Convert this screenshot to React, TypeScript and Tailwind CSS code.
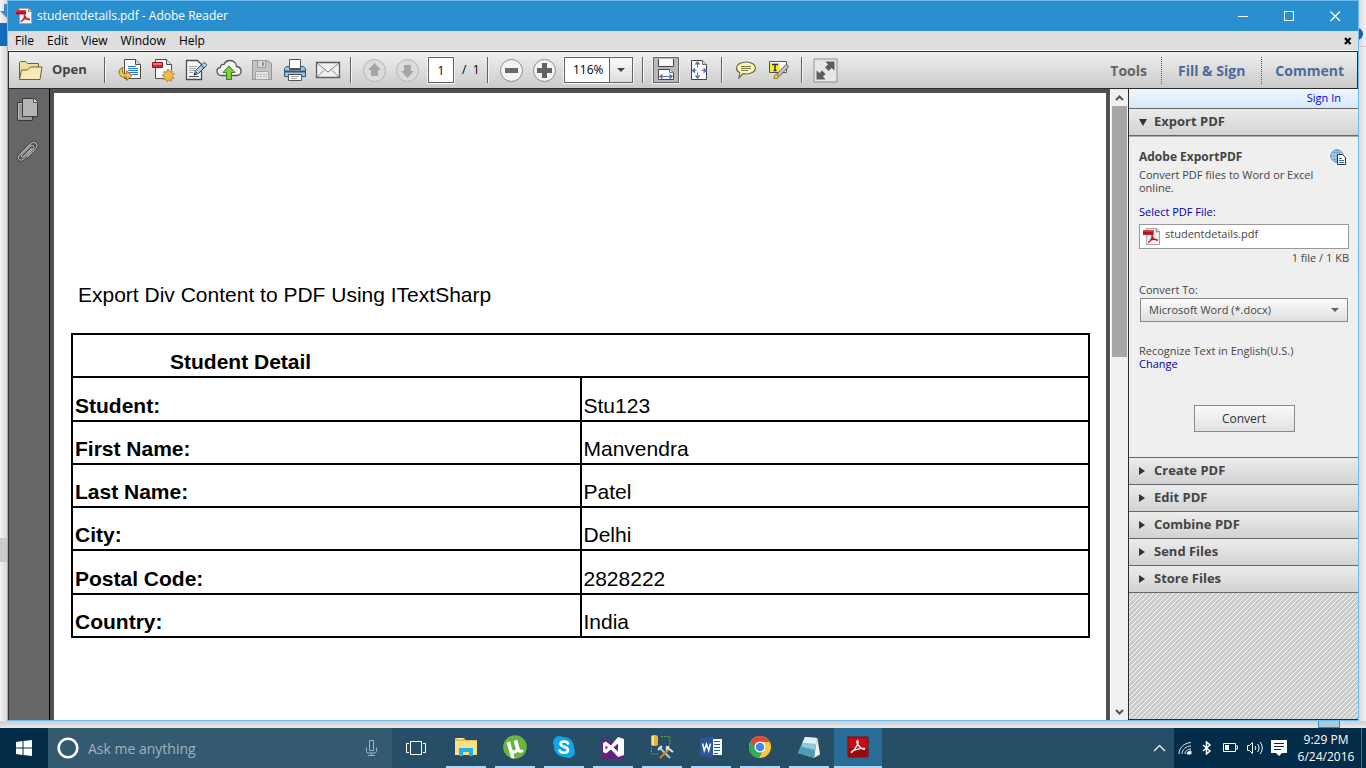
import React from "react";

type IconProps = { className?: string };

const PdfIcon = ({ className }: IconProps) => (
  <svg viewBox="0 0 16 16" className={className} aria-hidden="true">
    <path d="M3.5.5h9l3 3v12h-12z" fill="#f7f3f3" stroke="#a9a2a2" />
    <path d="M12.500.5v3h3" fill="#ddd" stroke="#a08080" />
    <path d="M0 2h10v4.500H0z" fill="#b3131c" />
    <path d="M0 2h10v1.500H0z" fill="#d8444a" />
    <path d="M8.500 6.500c.3 3-1.500 6-3.700 7.200M8.500 7c.5 2.500 2.500 4.500 5.500 4.500M6.500 11.500c2-1 4.500-1.200 7-.5" fill="none" stroke="#c01822" strokeWidth="1.300" />
  </svg>
);

const FolderIcon = () => (
  <svg width="25" height="21" viewBox="0 0 25 21" aria-hidden="true">
    <path d="M1.500 18.500v-16l1-1h5l2 2h11v15z" fill="#f0dda0" stroke="#6d6242" strokeLinejoin="round" />
    <path d="M1.500 19.500l2-9.500h6l3-3h11.500l-2 12.500z" fill="#f7e9b8" stroke="#6d6242" strokeLinejoin="round" />
  </svg>
);

const SheetBase = ({ x = 5 }: { x?: number }) => (
  <g transform={`translate(${x} 0)`}>
    <path d="M.5 1.500h11l5 5v14H.5z" fill="#fafafa" stroke="#4b4b4b" strokeLinejoin="round" />
    <path d="M11.500 1.500v5h5" fill="#ddd" stroke="#4b4b4b" strokeLinejoin="round" />
  </g>
);

const ConvertIcon = () => (
  <svg width="24" height="24" viewBox="0 0 24 24" aria-hidden="true">
    <SheetBase x={6} />
    <path d="M10 8.500h8M10 10.500h10M10 12.500h10M11 14.500h9M14 16.500h6" stroke="#2f73c4" />
    <path d="M5 9.500C2 10.500 0 13 1.500 16.500c1.500 2.500 4 3 7 2.500v3.500l5.500-5-5.500-4.500v2.700c-2 .5-3.500 0-4-1.800-.3-1.500 0-3 .5-4.400z" fill="#f3c24f" stroke="#9c6d13" strokeLinejoin="round" />
  </svg>
);

const CreateIcon = () => (
  <svg width="24" height="24" viewBox="0 0 24 24" aria-hidden="true">
    <SheetBase x={4} />
    <path d="M1.500 4.500h10v5h-10z" fill="#d9252b" stroke="#9a1419" />
    <path d="M2 6h9" stroke="#f08a8c" strokeWidth="1.500" />
    <path d="M17 11l1.400 2.300 2.600-.9-.3 2.700 2.700.9-2 1.900 1.600 2.300-2.700.4.100 2.700-2.400-1.400-2.100 1.800-1-2.600-2.700.3 1.100-2.500-2.300-1.500 2.500-1.200-.7-2.600 2.600.6z" fill="#f0bd45" stroke="#a97c1d" strokeWidth=".8" />
  </svg>
);

const SignIcon = () => (
  <svg width="24" height="24" viewBox="0 0 24 24" aria-hidden="true">
    <path d="M2.500 2.500h11l4 4v15h-15z" fill="#f7f7f7" stroke="#4b4b4b" strokeWidth="1.300" />
    <path d="M5 8.500h8M5 10.500h7M5 12.500h6M5 14.500h4" stroke="#a5a5a5" />
    <path d="M5 18.500h10" stroke="#555" />
    <path d="M10 17l1.500-4.500 8-7.500c1-1 4 1.500 3 2.500l-8 8z" fill="#a9cbe8" stroke="#34465a" strokeLinejoin="round" />
    <path d="M10 17l3-3M17 7l3 3" stroke="#34465a" />
  </svg>
);

const CloudIcon = () => (
  <svg width="26" height="24" viewBox="0 0 26 24" aria-hidden="true">
    <path d="M6 17.500C2.500 17.500 1 15.500 1 13.200 1 11 2.500 9.500 4.500 9.300 4.500 7 6 6 8 6.500 9 4 11 2.500 14 2.500c4 0 6.500 3 6.500 6 2.500.3 4.500 2 4.500 4.500 0 3-2 4.500-4.500 4.500z" fill="#f2f2f2" stroke="#555" strokeWidth="1.300" />
    <path d="M13 8l6 6.500h-3.500v7h-5v-7H7z" fill="#7fd03c" stroke="#3f7d1b" strokeLinejoin="round" />
  </svg>
);

const SaveIcon = () => (
  <svg width="22" height="24" viewBox="0 0 22 24" aria-hidden="true">
    <path d="M1.500 2.500h15l4 3v16h-19z" fill="#c3c3c3" stroke="#929292" />
    <path d="M6.500 2.500h8v7h-8z" fill="#dadada" stroke="#999" />
    <path d="M11 4h2v4h-2z" fill="#999" />
    <path d="M4.500 13.500h13v8h-13z" fill="#e3e3e3" stroke="#a5a5a5" />
    <path d="M6 16.500h10M6 18.500h10" stroke="#b5b5b5" strokeDasharray="2 1" />
  </svg>
);

const PrintIcon = () => (
  <svg width="24" height="24" viewBox="0 0 24 24" aria-hidden="true">
    <path d="M6.500 1.500h11v9h-11z" fill="#fff" stroke="#555" />
    <path d="M3.500 8.500h3v3h11v-3h3l2 2v8h-4v-2h-13v2h-4v-8z" fill="#9cc3dd" stroke="#34566f" strokeLinejoin="round" />
    <path d="M2 13.500h20" stroke="#34566f" strokeWidth="2" />
    <path d="M5.500 16.500h13v6h-13z" fill="#fff" stroke="#555" />
    <path d="M8 18.500h8M8 20.500h6" stroke="#aaa" />
  </svg>
);

const MailIcon = () => (
  <svg width="26" height="18" viewBox="0 0 26 18" aria-hidden="true">
    <path d="M1.500 1.500h23v15h-23z" fill="#efefef" stroke="#5c5c5c" strokeWidth="1.300" />
    <path d="M2 2l11 9L24 2M2 16l8-7.500M24 16l-8-7.500" fill="none" stroke="#8a8a8a" />
  </svg>
);

const RoundIcon = ({ kind }: { kind: "up" | "down" | "minus" | "plus" }) => {
  const faint = kind === "up" || kind === "down";
  return (
    <svg width="25" height="25" viewBox="0 0 25 25" aria-hidden="true">
      <circle cx="12.500" cy="12.500" r="11" fill={faint ? "#dcdcdc" : "#f3f3f3"} stroke={faint ? "#b4b4b4" : "#8c8c8c"} />
      {kind === "up" && <path d="M12.500 5l6.500 7h-3v6H9v-6H6z" fill="#a5a5a5" />}
      {kind === "down" && <path d="M12.500 20L6 13h3V7h7v6h3z" fill="#a5a5a5" />}
      {kind === "minus" && <path d="M6 10h13v5H6z" fill="#686868" />}
      {kind === "plus" && <path d="M10 5h5v5h5v5h-5v5h-5v-5H5v-5h5z" fill="#626262" />}
    </svg>
  );
};

const FitWidthIcon = () => (
  <svg width="18" height="22" viewBox="0 0 18 22" aria-hidden="true">
    <path d="M1.500 0v7.500h15V0" fill="#f7f7f7" stroke="#444" />
    <path d="M1.500 10.500h11l4 3v7h-15z" fill="#fff" stroke="#444" />
    <path d="M12.500 10.500v3h4" fill="#ddd" stroke="#777" />
    <path d="M4 17.500h10" stroke="#5573b4" />
    <path d="M2 17.500l3.500-3v6zM16 17.500l-3.500-3v6z" fill="#5573b4" />
  </svg>
);

const FitPageIcon = () => (
  <svg width="18" height="20" viewBox="0 0 18 20" aria-hidden="true">
    <path d="M1.500.5h11l4 4v15h-15z" fill="#fff" stroke="#444" />
    <path d="M12.500.5v4h4" fill="#ddd" stroke="#666" />
    <path d="M7.500 2.500v5m0 5v5M2.500 10.500h4m5 0h4" stroke="#5573b4" />
    <path d="M7.500 1L4.500 4.500h6zM7.500 19l-3-3.500h6zM1.500 10.500l3.500-3v6zM17 10.500l-3.500-3v6z" fill="#5573b4" />
  </svg>
);

const CommentIcon = () => (
  <svg width="22" height="18" viewBox="0 0 22 18" aria-hidden="true">
    <path d="M11 1c5.500 0 9.500 2.500 9.500 6s-4 6-9.500 6c-1 0-2-.1-3-.3L4 17l.8-5.200C2.500 10.700 1.500 9 1.500 7c0-3.500 4-6 9.500-6z" fill="#fff8a0" stroke="#69655a" strokeWidth="1.200" />
    <path d="M6 5.500h10M6 7.500h10M6 9.500h7" stroke="#77735a" />
  </svg>
);

const HighlightIcon = () => (
  <svg width="22" height="20" viewBox="0 0 22 20" aria-hidden="true">
    <path d="M1.500 1.500h17v11h-17z" fill="#fff" stroke="#555" />
    <path d="M2 3h10v9H2z" fill="#ffee2f" />
    <path d="M4 4.500h6M7 4.500v6M5.500 10.500h3" stroke="#333" strokeWidth="1.500" />
    <path d="M8.500 14.500l9-9.500c1.500-1 3.500 1 2.500 2.500l-9 9z" fill="#c5c5c5" stroke="#555" />
    <path d="M6 18.500c0-2.500 1-4 2.500-4l2.500 2c-.5 1.500-2.500 2.500-5 2z" fill="#e8d52d" stroke="#7d731d" />
  </svg>
);

const FullScreenIcon = () => (
  <svg width="25" height="25" viewBox="0 0 25 25" aria-hidden="true">
    <path d="M1 1h23v23H1z" fill="#e6e6e6" stroke="#8f8f8f" />
    <path d="M21.500 3.500v9l-3-2.500-3 3-3.500-3.500 3-3L12.500 3.500zM3.500 21.500v-9l3 2.500 2.500-2.500 3.500 3.500-2.500 2.500 2.500 3z" fill="#5d5d5d" />
  </svg>
);

const PagesIcon = () => (
  <svg width="23" height="25" viewBox="0 0 23 25" aria-hidden="true">
    <path d="M1.500 5.500h15v18h-15z" fill="#999" stroke="#393939" />
    <path d="M2.500 22V6.500H6" fill="none" stroke="#bbb" />
    <path d="M6.500 1.500h12l3 3v15h-15z" fill="#b5b5b5" stroke="#393939" />
    <path d="M17.500 1.500v4h4" fill="#ddd" stroke="#555" />
  </svg>
);

const clipPath = "M16.500 8.500l-8 8c-1.500 1.500-3-.2-1.700-1.700L15 6.500c2.700-2.500 5.200 0 3 2.500l-9.500 9.800c-3.600 3.400-7-.5-4-3.800L15.500 4c4.300-3.700 8.500.8 5 4.800L12.500 17";

const ClipIcon = () => (
  <svg width="25" height="25" viewBox="0 0 25 25" fill="none" strokeLinecap="round" aria-hidden="true">
    <path d={clipPath} stroke="#3c3c3c" strokeWidth="2.800" />
    <path d={clipPath} stroke="#b0b0b0" strokeWidth="1.200" />
  </svg>
);

const GlobeDocIcon = () => (
  <svg width="17" height="16" viewBox="0 0 17 16" className="mr-[2px]" aria-hidden="true">
    <circle cx="7" cy="7" r="6.200" fill="#b9d7f0" stroke="#4b86bd" />
    <path d="M1 7h12M7 1v12M2.500 3.500h9M2.500 10.500h9M7 1C3 4 3 10 7 13M7 1c4 3 4 9 0 12" fill="none" stroke="#5f97ca" strokeWidth=".8" />
    <path d="M7.500 5.500h5l3 3v7h-8z" fill="#fff" stroke="#333" />
    <path d="M9 9.500h3M9 11.500h5M9 13.500h5" stroke="#2f73c4" />
  </svg>
);

const Separator = () => <span className="mx-[6px] h-[26px] w-[2px] shrink-0 border-r border-[#f4f4f4] bg-[#626262]" />;

const ToolButton = ({ label, children }: { label: string; children: React.ReactNode }) => (
  <button type="button" aria-label={label} className="flex h-[30px] w-[33px] shrink-0 items-center justify-center">
    {children}
  </button>
);

const TitleBar = () => (
  <header className="flex h-[31px] shrink-0 items-center border-t border-[#6abdf2] bg-[#2a8fce] text-white">
    <PdfIcon className="ml-[8px] h-4 w-4" />
    <h1 className="ml-[5px] text-[12px] leading-4">studentdetails.pdf - Adobe Reader</h1>
    <div className="ml-auto flex h-full">
      <button type="button" aria-label="Minimize" className="flex w-[46px] items-center justify-center">
        <svg width="11" height="11"><path d="M0 5.500h10" stroke="#fff" /></svg>
      </button>
      <button type="button" aria-label="Maximize" className="flex w-[46px] items-center justify-center">
        <svg width="11" height="11"><path d="M.5.5h9v9h-9z" fill="none" stroke="#fff" /></svg>
      </button>
      <button type="button" aria-label="Close" className="flex w-[46px] items-center justify-center">
        <svg width="11" height="11"><path d="M.5.5l9.500 9.500M10 .5L.5 10" stroke="#fff" strokeWidth="1.200" /></svg>
      </button>
    </div>
  </header>
);

const MenuBar = () => (
  <nav className="flex h-[20px] shrink-0 items-center border-b border-white bg-[#dedede] text-[12px] leading-4 text-black">
    {["File", "Edit", "View", "Window", "Help"].map((m) => (
      <button key={m} type="button" className="pr-[6px] pl-[7px]">{m}</button>
    ))}
    <button type="button" aria-label="Close document" className="mr-[6px] ml-auto">
      <svg width="8" height="8"><path d="M1 1l5.500 6M6.500 1L1 7" stroke="#000" strokeWidth="2.200" /></svg>
    </button>
  </nav>
);

const Toolbar = () => (
  <div className="flex h-[38px] shrink-0 items-center border border-[#2c2c2c] bg-gradient-to-b from-[#efefef] to-[#cbcbcb] text-[12px] text-black">
    <button type="button" className="flex w-[89px] shrink-0 items-center gap-[9px] pl-[9px] text-[13px] font-bold text-[#444]">
      <FolderIcon />
      Open
    </button>
    <Separator />
    <div className="ml-px flex">
      <ToolButton label="Convert file"><ConvertIcon /></ToolButton>
      <ToolButton label="Create PDF"><CreateIcon /></ToolButton>
      <ToolButton label="Sign"><SignIcon /></ToolButton>
      <ToolButton label="Upload"><CloudIcon /></ToolButton>
      <ToolButton label="Save"><SaveIcon /></ToolButton>
      <ToolButton label="Print"><PrintIcon /></ToolButton>
      <ToolButton label="Email"><MailIcon /></ToolButton>
    </div>
    <Separator />
    <ToolButton label="Previous page"><RoundIcon kind="up" /></ToolButton>
    <ToolButton label="Next page"><RoundIcon kind="down" /></ToolButton>
    <input aria-label="Page number" defaultValue="1" className="ml-[4px] h-[26px] w-[26px] shrink-0 border border-[#636363] bg-white text-center text-[12px] outline outline-[#f4f4f4]" />
    <span className="w-[27px] shrink-0 pl-[8px] whitespace-pre">/  1</span>
    <Separator />
    <ToolButton label="Zoom out"><RoundIcon kind="minus" /></ToolButton>
    <ToolButton label="Zoom in"><RoundIcon kind="plus" /></ToolButton>
    <div className="relative mr-[3px] ml-[3px] h-[26px] w-[69px] shrink-0 border border-[#636363] bg-white outline outline-[#f4f4f4]">
      <select aria-label="Zoom level" className="h-full w-full appearance-none pl-[8px] text-[12px]">
        <option>116%</option>
      </select>
      <span className="pointer-events-none absolute inset-y-0 right-0 flex w-[23px] items-center justify-center border-l border-[#636363] bg-gradient-to-b from-[#fafafa] to-[#dedede]">
        <svg width="8" height="4"><path d="M0 0h8L4 4z" fill="#444" /></svg>
      </span>
    </div>
    <Separator />
    <button type="button" aria-label="Fit width" aria-pressed="true" className="mx-[3px] flex h-[26px] w-[26px] shrink-0 items-center justify-center border border-[#666] bg-[#b9b9b9] outline outline-[#f4f4f4]">
      <FitWidthIcon />
    </button>
    <ToolButton label="Fit page"><FitPageIcon /></ToolButton>
    <Separator />
    <ToolButton label="Comment"><CommentIcon /></ToolButton>
    <ToolButton label="Highlight"><HighlightIcon /></ToolButton>
    <Separator />
    <ToolButton label="Full screen"><FullScreenIcon /></ToolButton>
    <div className="ml-auto flex h-[27px] items-center text-[14px] font-bold text-[#4a6b9c]">
      <button type="button" className="h-full px-[14px] text-[#656565]">Tools</button>
      <button type="button" className="h-full border-l border-dotted border-[#555] px-[16px]">Fill &amp; Sign</button>
      <button type="button" className="h-full border-l border-dotted border-[#555] px-[13px]">Comment</button>
    </div>
  </div>
);

const rows: [string, string][] = [
  ["Student:", "Stu123"],
  ["First Name:", "Manvendra"],
  ["Last Name:", "Patel"],
  ["City:", "Delhi"],
  ["Postal Code:", "2828222"],
  ["Country:", "India"],
];

const DocumentPage = () => (
  <main className="min-w-0 flex-1 bg-[#505050] px-[4px] pt-[4px]">
    <article className="h-full bg-white pt-[188px] pr-[16px] pl-[17px] font-['Liberation_Sans',Arial,sans-serif] text-[21px] leading-7 text-black">
      <p className="pl-[7px]">Export Div Content to PDF Using ITextSharp</p>
      <table className="mt-[24px] h-[305px] w-full table-fixed border-collapse border-2 border-black">
        <tbody>
          <tr>
            <th colSpan={2} className="border-2 border-black p-0 pl-[97px] text-left align-bottom font-bold">Student Detail</th>
          </tr>
          {rows.map(([k, v]) => (
            <tr key={k}>
              <th scope="row" className="border-2 border-black p-0 pl-[2px] text-left align-bottom font-bold">{k}</th>
              <td className="border-2 border-black p-0 pl-[2px] align-bottom">{v}</td>
            </tr>
          ))}
        </tbody>
      </table>
    </article>
  </main>
);

const ScrollBar = () => (
  <div className="flex w-[18px] shrink-0 flex-col items-center border-l border-white bg-[#f0f0f0]">
    <button type="button" aria-label="Scroll up" className="flex h-[17px] w-full items-center justify-center">
      <svg width="9" height="6"><path d="M1 5l3.500-3.500L8 5" fill="none" stroke="#555" strokeWidth="2" /></svg>
    </button>
    <div className="h-[251px] w-[15px] bg-[#a6a6a6]" />
    <button type="button" aria-label="Scroll down" className="mt-auto flex h-[17px] w-full items-center justify-center">
      <svg width="9" height="6"><path d="M1 1l3.500 3.500L8 1" fill="none" stroke="#555" strokeWidth="2" /></svg>
    </button>
  </div>
);

const SidePanel = () => (
  <aside className="flex w-[230px] shrink-0 flex-col border-b border-l border-[#2c2c2c] bg-[#efefef] text-[11px] text-[#444]">
    <div className="flex h-[19px] shrink-0 items-center justify-end bg-gradient-to-b from-[#eef7fe] to-[#d4e9f9] pr-[17px]">
      <a href="#sign-in" className="text-[#0000e0]">Sign In</a>
    </div>
    <button type="button" aria-expanded="true" className="flex h-[28px] shrink-0 items-center border-t border-b border-[#666] bg-gradient-to-b from-[#ececec] to-[#d2d2d2] pl-[10px] text-[13px] font-bold text-[#444]">
      <svg width="8" height="7" className="mr-[7px]"><path d="M0 0h8L4 7z" fill="#333" /></svg>
      Export PDF
    </button>
    <form className="flex shrink-0 flex-col border-t border-[#aaa] pt-[12px] pr-[9px] pb-[25px] pl-[10px]" onSubmit={(e) => e.preventDefault()}>
      <div className="flex justify-between">
        <h2 className="text-[12px] leading-4 font-bold">Adobe ExportPDF</h2>
        <GlobeDocIcon />
      </div>
      <p className="mt-[3px] leading-[13px]">Convert PDF files to Word or Excel<br />online.</p>
      <label htmlFor="pdf-file" className="mt-[11px] leading-[14px] text-[#0000a8]">Select PDF File:</label>
      <div className="mt-[5px] flex h-[25px] items-center border border-[#999] bg-white px-[3px]">
        <PdfIcon className="h-[17px] w-[17px] shrink-0" />
        <input id="pdf-file" readOnly value="studentdetails.pdf" className="mb-[4px] ml-[5px] min-w-0 flex-1 outline-none" />
      </div>
      <p className="mt-[2px] text-right leading-[14px]">1 file / 1 KB</p>
      <label htmlFor="format" className="mt-[18px] leading-[14px]">Convert To:</label>
      <div className="relative mx-px mt-[1px] h-[24px] border border-[#8a8a8a] bg-gradient-to-b from-[#fbfbfb] to-[#dfdfdf]">
        <select id="format" className="h-full w-full appearance-none pl-[8px] text-[11px]">
          <option>Microsoft Word (*.docx)</option>
        </select>
        <svg width="8" height="4" className="pointer-events-none absolute top-[9px] right-[8px]"><path d="M0 0h8L4 4z" fill="#666" /></svg>
      </div>
      <p className="mt-[22px] leading-[13px]">Recognize Text in English(U.S.)</p>
      <a href="#language" className="self-start leading-[13px] text-[#0000a8]">Change</a>
      <button type="submit" className="mt-[35px] h-[27px] w-[101px] self-center border border-[#8a8a8a] bg-gradient-to-b from-[#fafafa] to-[#e0e0e0] text-[12px] text-[#333]">Convert</button>
    </form>
    {["Create PDF", "Edit PDF", "Combine PDF", "Send Files", "Store Files"].map((s) => (
      <button key={s} type="button" aria-expanded="false" className="flex h-[27px] shrink-0 items-center border-t border-[#666] bg-gradient-to-b from-[#ececec] to-[#d2d2d2] pl-[10px] text-[13px] font-bold text-[#444]">
        <svg width="6" height="8" className="mr-[9px]"><path d="M0 0v8l6-4z" fill="#333" /></svg>
        {s}
      </button>
    ))}
    <div className="min-h-0 flex-1 border-t border-[#666]">
      <svg width="100%" height="100%" className="block" aria-hidden="true">
        <defs>
          <pattern id="hatch" width="5" height="5" patternUnits="userSpaceOnUse" shapeRendering="crispEdges">
            <path d="M0 0h5v5H0z" fill="#cbcbcb" />
            <path d="M4 0h1v1H4zM3 1h1v1H3zM2 2h1v1H2zM1 3h1v1H1zM0 4h1v1H0z" fill="#fafafa" />
          </pattern>
        </defs>
        <rect width="100%" height="100%" fill="url(#hatch)" />
      </svg>
    </div>
  </aside>
);

const taskApps: { name: string; icon: React.ReactNode }[] = [
  {
    name: "File Explorer",
    icon: (
      <svg width="24" height="22" viewBox="0 0 24 22">
        <path d="M1 2h9l1.500 2H23v15H1z" fill="#e8c052" />
        <path d="M1 5h22v14H1z" fill="#fbe08c" />
        <path d="M3 2.500h6" stroke="#fff2b8" />
        <path d="M5 20v-8h14v8h-4v-4H9v4z" fill="#1fb3ec" />
      </svg>
    ),
  },
  {
    name: "uTorrent",
    icon: (
      <svg width="24" height="24" viewBox="0 0 24 24">
        <circle cx="12" cy="12" r="11.800" fill="#6db33f" />
        <path d="M3.500 7.500l3.500-1.200 2.200 8c.6 2 4 1.200 3.500-1l-2-7.300 3.500-1.200 2.500 9c.4 1.200 1.500 1.300 3 .6l.8 2.300c-2.300 1.600-4.500 1.500-5.700-.2-1 1.800-2.800 2.300-4.300 2l1 5-3.300-.6z" fill="#fff" />
      </svg>
    ),
  },
  {
    name: "Skype",
    icon: (
      <svg width="24" height="24" viewBox="0 0 24 24">
        <circle cx="12" cy="12" r="10" fill="#10a7e8" />
        <circle cx="7.500" cy="7.500" r="6.500" fill="#10a7e8" />
        <circle cx="16.500" cy="16.500" r="6.500" fill="#10a7e8" />
        <path d="M16 8.500C15 6 8.500 5.500 8.500 9c0 3.500 7.500 2 7.500 6 0 3.500-7 3.500-8.500.5" fill="none" stroke="#fff" strokeWidth="2.600" strokeLinecap="round" />
      </svg>
    ),
  },
  {
    name: "Visual Studio",
    icon: (
      <svg width="24" height="24" viewBox="0 0 24 24">
        <path d="M1 5h6l5 3 5-6 6 2v20H1z" fill="#68217a" />
        <path d="M2 8l3-1.500 5 4L17 2l6 2v16l-6 2-7-7.500-5 4L2 17zm2.500 2.500v4l2.500-2zm12.500-2l-4.500 4L17 16.500z" fill="#fff" fillRule="evenodd" />
      </svg>
    ),
  },
  {
    name: "SQL Server",
    icon: (
      <svg width="26" height="26" viewBox="0 0 26 26">
        <path d="M2 2.500c0-2 7-2 7 0v8c0 2-7 2-7 0z" fill="#e9b332" />
        <path d="M4 2v9" stroke="#fff0a0" strokeWidth="1.500" />
        <path d="M12 2.500h9v8M2.500 13v7H9" fill="none" stroke="#55a845" strokeDasharray="2 1" />
        <path d="M10 13l11 11" stroke="#b7c3cc" strokeWidth="2" />
        <path d="M20 15l-9 9" stroke="#c58b2b" strokeWidth="2" />
        <path d="M17 12.500l7 5.500M20 12l-3 4M9 16l4-4" stroke="#dde5ea" strokeWidth="2" />
      </svg>
    ),
  },
  {
    name: "Word",
    icon: (
      <svg width="24" height="24" viewBox="0 0 24 24">
        <path d="M13 4h10v16H13z" fill="#fff" />
        <path d="M15 6.500h6M15 9.500h6M15 12.500h6M15 15.500h6M15 18.500h4" stroke="#2b579a" />
        <path d="M1 3.500L14 1v22L1 20.500z" fill="#2b579a" />
        <path d="M3.500 8.500l1.800 7 2.200-6.500 2.200 6.500 1.800-7" fill="none" stroke="#fff" strokeWidth="1.500" />
      </svg>
    ),
  },
  {
    name: "Chrome",
    icon: (
      <svg width="24" height="24" viewBox="0 0 24 24">
        <circle cx="12" cy="12" r="11" fill="#fcc934" />
        <path d="M12 12L2.500 6.500A11 11 0 0 0 11 23l5-9z" fill="#35a853" />
        <path d="M12 12H7L2.500 6.500a11 11 0 0 1 19.300.5H12z" fill="#dd4b3e" />
        <circle cx="12" cy="12" r="5.500" fill="#fff" />
        <circle cx="12" cy="12" r="4.300" fill="#4285f4" />
      </svg>
    ),
  },
  {
    name: "Notepad",
    icon: (
      <svg width="26" height="24" viewBox="0 0 26 24">
        <path d="M9 2l13 1 2 17-4 2z" fill="#8a7748" />
        <path d="M21 3l3 16-6 4z" fill="#f1f1ec" />
        <path d="M9 2l12 1-3 20L2 18z" fill="#8fc9d8" />
        <path d="M9 2l12 1-.7 6L6.500 7.500z" fill="#e3f1f4" />
        <path d="M5 11.500L2 18l16 5 1.200-8z" fill="#4d9db2" />
      </svg>
    ),
  },
];

const Taskbar = () => (
  <footer className="flex h-[40px] shrink-0 bg-[#264f67] text-white">
    <button type="button" aria-label="Start" className="flex w-[48px] shrink-0 items-center justify-center bg-[#022c47]">
      <svg width="16" height="16" viewBox="0 0 16 16"><path d="M0 2l6.500-1v6.500H0zM7.500.9L16 0v7.500H7.500zM0 8.500h6.500V15L0 14zM7.500 8.500H16V16l-8.500-1z" fill="#fff" /></svg>
    </button>
    <div className="flex w-[344px] shrink-0 items-center bg-[#345a71] pl-[9px]">
      <svg width="22" height="22" className="shrink-0" aria-hidden="true"><circle cx="11" cy="11" r="9.300" fill="none" stroke="#fff" strokeWidth="2.600" /></svg>
      <input aria-label="Search" placeholder="Ask me anything" className="ml-[9px] min-w-0 flex-1 text-[14px] outline-none placeholder:text-[#a1b2bd]" />
      <button type="button" aria-label="Voice search" className="mr-[14px]">
        <svg width="13" height="16"><path d="M4.500.5h4v10h-4zM1.500 7.500v4l1 1.500h8l1-1.500v-4M6.500 13v2M3 15.500h7" fill="none" stroke="#a1b2bd" /></svg>
      </button>
    </div>
    <button type="button" aria-label="Task view" className="flex w-[50px] shrink-0 items-center justify-center pr-[2px]">
      <svg width="21" height="14"><path d="M4.500.5h11v13h-11zM3 2.500H.5v9H3M17 2.500h2.500v9H17" fill="none" stroke="#fff" /></svg>
    </button>
    <div className="flex min-w-0 flex-1">
      {taskApps.map((a) => (
        <button key={a.name} type="button" aria-label={a.name} className="flex w-[49px] shrink-0 flex-col items-center pr-px">
          <span className="flex flex-1 items-center">{a.icon}</span>
          <span className="h-[2px] w-[40px] bg-[#abd8f8]" />
        </button>
      ))}
      <button type="button" aria-label="Adobe Reader" className="flex w-[48px] shrink-0 flex-col items-center bg-[#296c97]">
        <span className="flex flex-1 items-center">
          <svg width="22" height="22" viewBox="0 0 22 22">
            <path d="M1 1h20v20H1z" fill="#c40d12" stroke="#7d0809" />
            <path d="M1.500 12h19v8.500h-19z" fill="#990a0d" />
            <path d="M10 4c3 1-.5 8-5.500 12.500-1.500-.5 5-4.500 13-4 1.500 2-6 .5-8-7.500" fill="none" stroke="#fff" strokeWidth="1.300" />
          </svg>
        </span>
        <span className="h-[2px] w-full bg-[#abd8f8]" />
      </button>
    </div>
    <button type="button" aria-label="Show hidden icons" className="flex w-[30px] shrink-0 items-center justify-center">
      <svg width="13" height="8"><path d="M1 7l5.500-5.500L12 7" fill="none" stroke="#fff" strokeWidth="1.200" /></svg>
    </button>
    <div className="flex w-[192px] shrink-0 items-center bg-[#022c47]">
      <button type="button" aria-label="Network" className="flex w-[21px] justify-center">
        <svg width="14" height="14" fill="none" stroke="#e7edf1"><path d="M1 13C1 7 6 2 13 1.500M4 13c0-4.500 4-8 9-8M7 13c0-3 3-5 6-5" /><path d="M9 13c0-2 2-3 4-3v3z" fill="#fff" /></svg>
      </button>
      <button type="button" aria-label="Bluetooth" className="flex w-[24px] justify-center">
        <svg width="10" height="14"><path d="M1 4l7 6-3.500 3V1L8 4l-7 6" fill="none" stroke="#fff" strokeWidth="1.500" /></svg>
      </button>
      <button type="button" aria-label="Battery" className="flex w-[24px] justify-center">
        <svg width="16" height="10"><path d="M.5.5h12v8H.5zM13 3h1.500v3H13" fill="none" stroke="#fff" /><path d="M2 2h4v5H2z" fill="#fff" /></svg>
      </button>
      <button type="button" aria-label="Volume" className="flex w-[24px] justify-center">
        <svg width="17" height="14" fill="none" stroke="#fff"><path d="M.5 4.500h2l3-3v11l-3-3h-2zM8 5c1 1 1 3 0 4M10.500 3c2 2.500 2 5.500 0 8M13 1c3 3.500 3 8.500 0 12" /></svg>
      </button>
      <button type="button" aria-label="Notifications" className="flex w-[24px] justify-center">
        <svg width="16" height="16"><path d="M0 0h16v13h-5l-3 3-3-3H0z" fill="#fff" /><path d="M3 3.500h10M3 6.500h10M3 9.500h7" stroke="#022c47" /></svg>
      </button>
      <div className="flex-1 text-center text-[12px] leading-[17px] whitespace-nowrap">
        <p>9:29 PM</p>
        <p>6/24/2016</p>
      </div>
      <span className="mr-[4px] h-full w-px bg-[#52697a]" />
    </div>
  </footer>
);

export default function App() {
  return (
    <div className="flex h-screen flex-col overflow-hidden bg-[#e6e6e6] font-['Open_Sans','Noto_Sans',sans-serif]">
      <div className="flex min-h-0 flex-1">
        <div className="flex w-[7px] shrink-0 flex-col bg-gradient-to-r from-[#f3f3f3] to-[#d9d9d9]" aria-hidden="true">
          <svg width="7" height="23"><path d="M4 4h3v14L0 11h4z" fill="#4089c9" /></svg>
          <span className="h-[23px] bg-[#126bbb]" />
          <span className="mt-[492px] h-[24px] bg-[#c9c9c9]" />
        </div>
        <div className="flex min-w-0 flex-1 flex-col border-x border-b border-[#6abdf2]">
          <TitleBar />
          <MenuBar />
          <Toolbar />
          <div className="flex min-h-0 flex-1">
            <nav aria-label="Panes" className="flex w-[42px] shrink-0 flex-col items-center gap-[18px] border-r border-l border-r-black border-l-[#333] bg-[#666] pt-[8px] pr-[4px]">
              <button type="button" aria-label="Page thumbnails"><PagesIcon /></button>
              <button type="button" aria-label="Attachments"><ClipIcon /></button>
            </nav>
            <DocumentPage />
            <ScrollBar />
            <SidePanel />
          </div>
        </div>
        <div className="flex w-[7px] shrink-0 flex-col bg-gradient-to-r from-[#d9d9d9] to-[#f3f3f3]" aria-hidden="true">
          <svg width="7" height="47"><circle cx="-2" cy="34" r="6" fill="#0f63ae" /><path d="M0 46.500h7" stroke="#c4c4c4" /></svg>
        </div>
      </div>
      <div className="flex h-[7px] shrink-0 justify-end bg-gradient-to-b from-[#cfcfcf] to-[#e9e9e9] pr-[26px]" aria-hidden="true">
        <span className="h-full w-[22px] border border-t-0 border-[#2b91bd] bg-[#a7cbdc]" />
      </div>
      <Taskbar />
    </div>
  );
}
